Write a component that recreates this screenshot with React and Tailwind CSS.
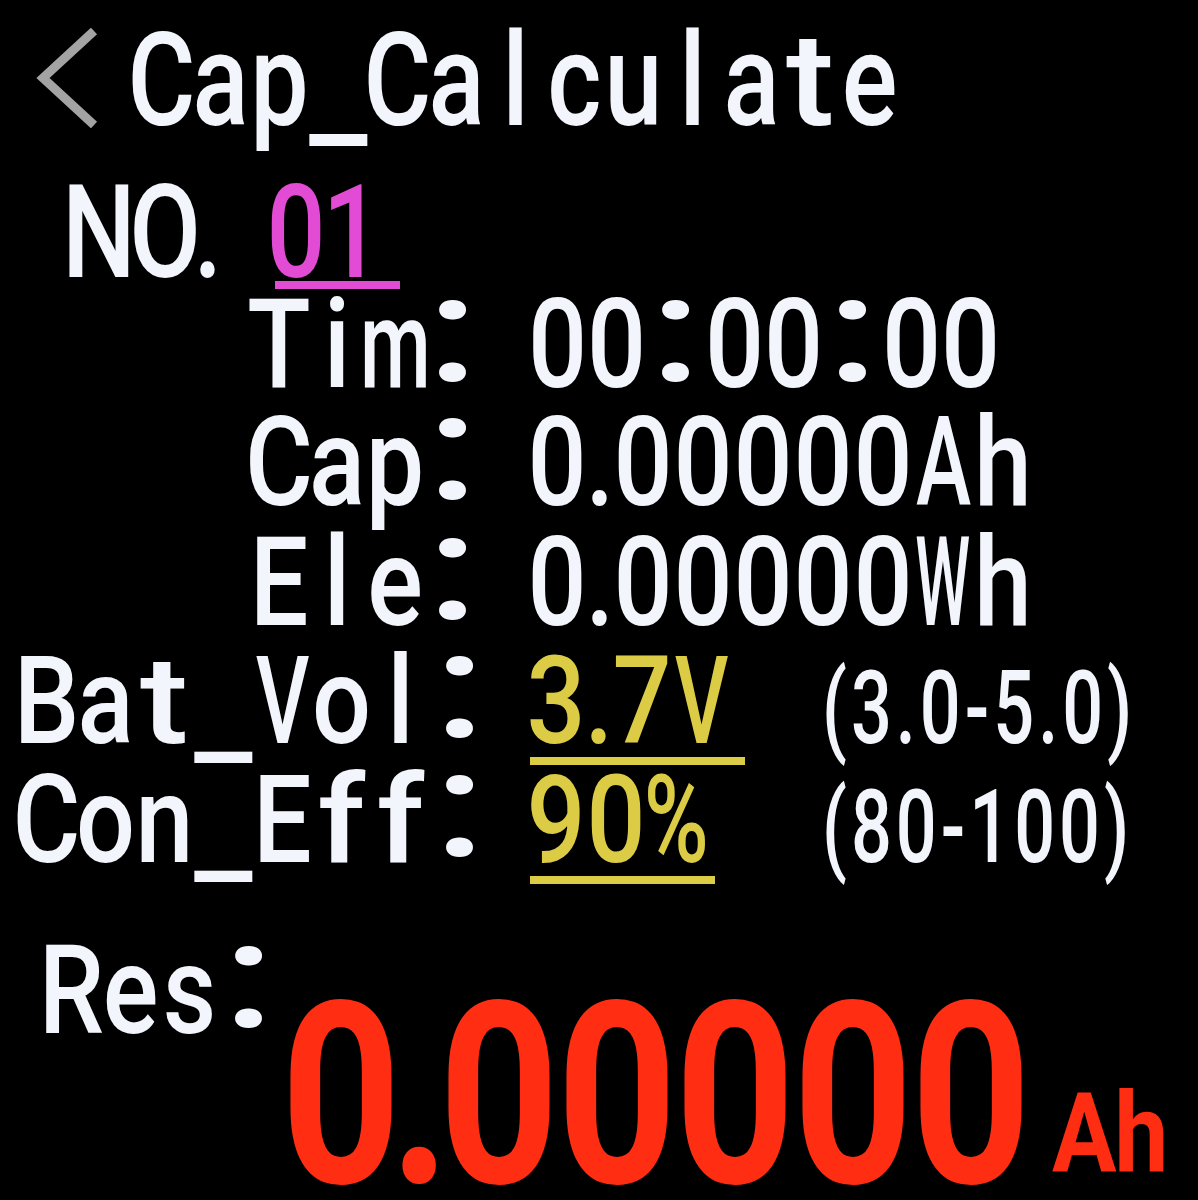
import React from "react";

// per-glyph horizontal squeeze so the proportional face sits in fixed LCD cells
const SQUEEZE = {
  m: "scale-x-[0.78]",
  W: "scale-x-[0.6]",
  A: "scale-x-[0.8]",
  V: "scale-x-[0.8]",
  "%": "scale-x-[0.85]",
  f: "scale-x-[1.3]",
  t: "scale-x-[1.4]",
  _: "scale-x-[1.25] translate-y-[9px]",
};

function Mono({ text, cell, dot, sy, size = "text-[104px] leading-none", origin = "origin-[50%_84.2%]", className = "" }) {
  return (
    <span className={`flex items-baseline ${size} ${className}`}>
      {[...text].map((ch, i) =>
        ch === ":" ? (
          <span key={i} className={`flex justify-center text-[150px] leading-[0.48] ${cell}`}>
            <span className="block -translate-y-[6px] scale-x-[1.3]">:</span>
          </span>
        ) : (
          <span key={i} className={`flex justify-center ${ch === "." && dot ? dot : cell}`}>
            <span className={`block whitespace-pre ${origin} ${sy} ${SQUEEZE[ch] || ""}`}>{ch}</span>
          </span>
        )
      )}
    </span>
  );
}

function Range({ text }) {
  return (
    <span className="block origin-[50%_84.2%] scale-y-[1.42] text-[72px] leading-none tracking-[4px]">
      {text}
    </span>
  );
}

export default function App() {
  return (
    <div className="h-[1200px] w-full overflow-hidden bg-black pt-[38px] font-['Roboto',sans-serif] font-medium text-[#f2f5fb]">
      {/* Title bar */}
      <div className="flex h-[152px] items-baseline pl-[36px]">
        <svg className="-mt-[10px] h-[100px] w-[62px] self-start" viewBox="0 0 62 100" fill="none">
          <polyline points="58,3 7,50 58,97" stroke="#a3a3a3" strokeWidth="9" />
        </svg>
        <Mono text="Cap_Calculate" cell="w-[59px]" sy="scale-y-[1.25]" className="ml-[34px]" />
      </div>

      {/* Slot number */}
      <div className="flex h-[110px] items-baseline pl-[66px]">
        <Mono text="NO" cell="w-[66px]" sy="scale-y-[1.25]" />
        <Mono text="." cell="w-[20px]" sy="scale-y-[1.25]" />
        <div className="ml-[50px] flex flex-col text-[#e24bd3]">
          <Mono text="01" cell="w-[56px]" sy="scale-y-[1.25]" />
          <div className="-mt-[13px] ml-[7px] h-[8px] w-[125px] bg-[#e24bd3]" />
        </div>
      </div>

      {/* Readings */}
      <div className="flex h-[118px] items-baseline pl-[250px]">
        <Mono text="Tim:" cell="w-[58px]" sy="scale-y-[1.2]" />
        <Mono text="00:00:00" cell="w-[59px]" sy="scale-y-[1.2]" className="ml-[46px]" />
      </div>
      <div className="flex h-[120px] items-baseline pl-[250px]">
        <Mono text="Cap:" cell="w-[58px]" sy="scale-y-[1.2]" />
        <Mono text="0.00000Ah" cell="w-[60px]" dot="w-[26px]" sy="scale-y-[1.2]" className="ml-[45px]" />
      </div>
      <div className="flex h-[118px] items-baseline pl-[250px]">
        <Mono text="Ele:" cell="w-[58px]" sy="scale-y-[1.2]" />
        <Mono text="0.00000Wh" cell="w-[60px]" dot="w-[26px]" sy="scale-y-[1.2]" className="ml-[45px]" />
      </div>

      {/* Settings */}
      <div className="flex h-[119px] items-baseline pl-[17px]">
        <Mono text="Bat_Vol:" cell="w-[59px]" sy="scale-y-[1.17]" />
        <div className="ml-[37px] flex w-[296px] flex-col text-[#dccb45]">
          <Mono text="3.7V" cell="w-[60px]" dot="w-[26px]" sy="scale-y-[1.17]" />
          <div className="-mt-[3px] ml-[4px] h-[8px] w-[215px] bg-[#dccb45]" />
        </div>
        <Range text="(3.0-5.0)" />
      </div>
      <div className="flex h-[171px] items-baseline pl-[17px]">
        <Mono text="Con_Eff:" cell="w-[59px]" sy="scale-y-[1.17]" />
        <div className="ml-[37px] flex w-[296px] flex-col text-[#dccb45]">
          <Mono text="90%" cell="w-[60px]" sy="scale-y-[1.17]" />
          <div className="-mt-[3px] ml-[4px] h-[8px] w-[185px] bg-[#dccb45]" />
        </div>
        <Range text="(80-100)" />
      </div>

      {/* Result */}
      <div className="flex items-start pl-[42px]">
        <Mono text="Res:" cell="w-[59px]" sy="scale-y-[1.19]" />
        <div className="ml-[4px] mt-[81px] flex items-end font-bold text-[#ff2d12]">
          <Mono
            text="0.00000"
            cell="w-[118px]"
            dot="w-[40px]"
            size="text-[210px] leading-[0.8]"
            origin="origin-[50%_92.7%]"
            sy="scale-y-[1.21]"
          />
          <span className="mb-[8px] ml-[22px] block origin-[50%_84.2%] scale-y-[1.16] text-[96px] leading-none tracking-[-2px]">
            Ah
          </span>
        </div>
      </div>
    </div>
  );
}
